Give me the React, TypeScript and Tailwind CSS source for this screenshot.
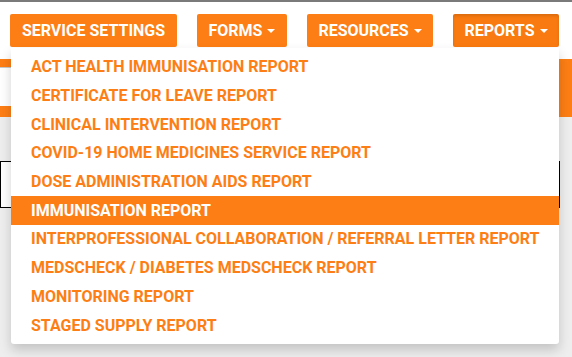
import { useState } from 'react';

const reports = [
  'ACT HEALTH IMMUNISATION REPORT',
  'CERTIFICATE FOR LEAVE REPORT',
  'CLINICAL INTERVENTION REPORT',
  'COVID-19 HOME MEDICINES SERVICE REPORT',
  'DOSE ADMINISTRATION AIDS REPORT',
  'IMMUNISATION REPORT',
  'INTERPROFESSIONAL COLLABORATION / REFERRAL LETTER REPORT',
  'MEDSCHECK / DIABETES MEDSCHECK REPORT',
  'MONITORING REPORT',
  'STAGED SUPPLY REPORT',
];

function Caret() {
  return (
    <span className="ml-[5px] inline-block h-0 w-0 border-x-[4px] border-t-[4px] border-x-transparent border-t-white" />
  );
}

export default function App() {
  const [active, setActive] = useState('IMMUNISATION REPORT');

  return (
    <div
      className="relative flex h-[357px] w-[572px] flex-col overflow-hidden border-t-2 border-[#7a7a7a] bg-white"
      style={{ fontFamily: 'Roboto, "Liberation Sans", sans-serif' }}
    >
      {/* Nav buttons */}
      <div className="flex gap-[20px] pl-[10px] pt-[12px]">
        <button className="h-[33px] w-[167px] rounded-[2px] bg-[#fd7e14] text-[16px] font-bold text-white">
          SERVICE SETTINGS
        </button>
        <button className="flex h-[33px] w-[90px] items-center justify-center rounded-[2px] bg-[#fd7e14] text-[16px] font-bold text-white">
          FORMS
          <Caret />
        </button>
        <button className="flex h-[33px] w-[126px] items-center justify-center rounded-[2px] bg-[#fd7e14] text-[16px] font-bold text-white">
          RESOURCES
          <Caret />
        </button>
        <div className="relative">
          <button className="flex h-[33px] w-[106px] items-center justify-center rounded-[2px] bg-[#f97a10] text-[16px] font-bold text-white shadow-[inset_0_2px_3px_rgba(0,0,0,0.12)]">
            REPORTS
            <Caret />
          </button>

          {/* Dropdown */}
          <div className="absolute right-0 top-[34px] z-10 w-[548px] rounded-b-[3px] bg-white pb-[4px] pt-[5px] shadow-[0_6px_12px_rgba(0,0,0,0.18)]">
            {reports.map((r) => (
              <div
                key={r}
                onMouseEnter={() => setActive(r)}
                className={`flex h-[28.7px] items-center pl-[20px] text-[16px] font-bold ${
                  active === r ? 'bg-[#fd7e14] text-white' : 'text-[#fd7e14]'
                }`}
              >
                {r}
              </div>
            ))}
          </div>
        </div>
      </div>

      {/* Page behind the menu */}
      <div className="mt-[12px] flex h-[58px]">
        <div className="flex w-[300px] flex-col">
          <div className="h-[8px] bg-[#fd7e14]" />
          <div className="h-[1px] bg-[#c8c8c8]" />
          <div className="flex-1 bg-white" />
          <div className="h-[11px] bg-[#fd7e14]" />
        </div>
        <div className="flex-1 bg-[#fd7e14]" />
      </div>
      <div className="flex-1 bg-[#eeeeee] pt-[44px]">
        <div className="h-[47px] w-[560px] border border-black bg-white" />
      </div>
    </div>
  );
}
